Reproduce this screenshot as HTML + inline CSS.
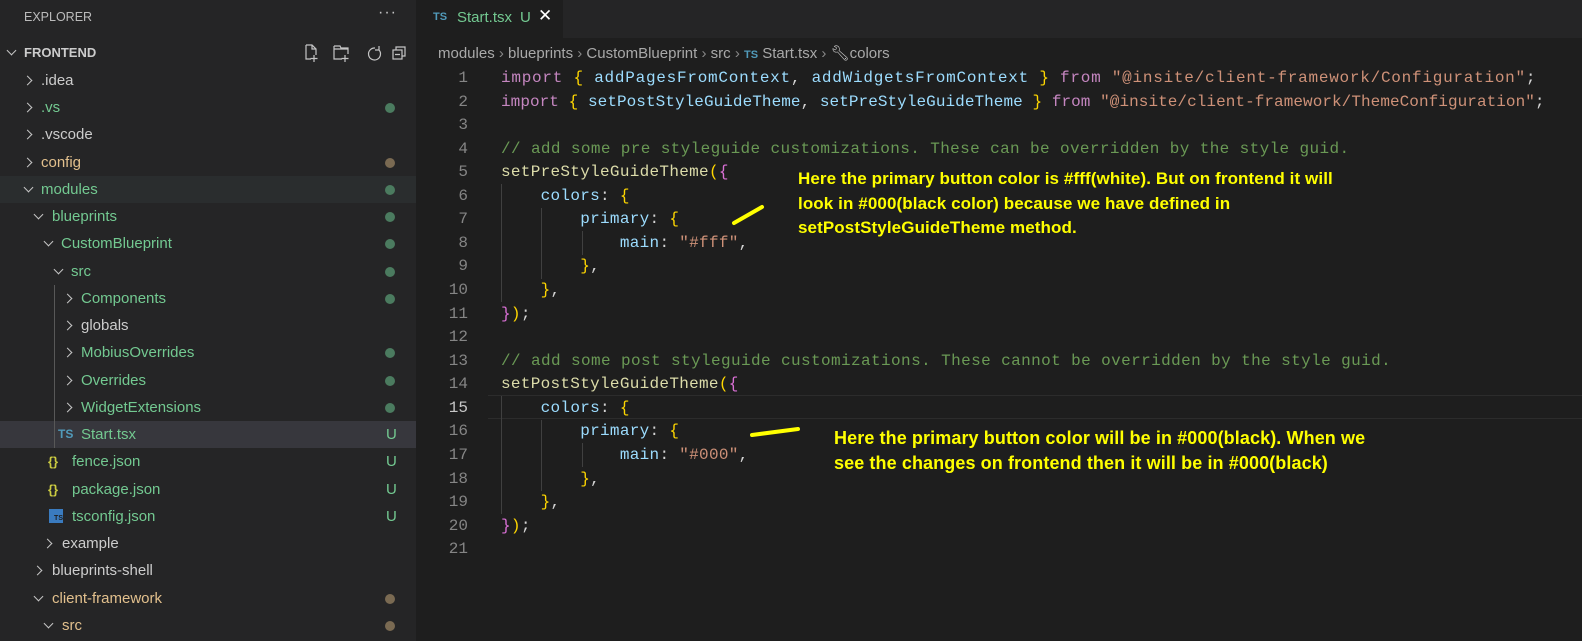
<!DOCTYPE html>
<html><head><meta charset="utf-8"><style>
*{margin:0;padding:0;box-sizing:border-box}
body{width:1582px;height:641px;background:#1e1e1e;overflow:hidden;position:relative;font-family:"Liberation Sans",sans-serif}
#side{position:absolute;left:0;top:0;width:416px;height:641px;background:#252526}
.r{position:absolute;left:0;width:416px;height:27px;line-height:27px;font-size:15px;color:#cccccc;white-space:nowrap}
.r .t{position:absolute;top:0}
.cr{position:absolute;top:10px;width:7px;height:7px;border-right:1.3px solid #c5c5c5;border-bottom:1.3px solid #c5c5c5;transform:rotate(-45deg)}
.cd{position:absolute;top:8px;width:7px;height:7px;border-right:1.3px solid #c5c5c5;border-bottom:1.3px solid #c5c5c5;transform:rotate(45deg)}
.g{color:#73c991}.o{color:#e2c08d}
.dot{position:absolute;left:385px;top:9px;width:10px;height:10px;border-radius:50%;background:#4b7b5f}
.dot.b{background:#7a6a52}
.U{position:absolute;left:386px;top:0;color:#73c991;font-size:15px}
#tabs{position:absolute;left:416px;top:0;width:1166px;height:38px;background:#252526}
#tab{position:absolute;left:416px;top:0;width:147px;height:38px;background:#1e1e1e}
.code{position:absolute;left:501px;font-family:"Liberation Mono",monospace;font-size:16px;letter-spacing:0.3px;color:#d4d4d4;white-space:pre;height:24px;line-height:24px}
.ln{position:absolute;left:430px;width:38px;text-align:right;font-family:"Liberation Mono",monospace;font-size:16px;color:#858585;height:24px;line-height:24px}
.k{color:#c586c0}.v{color:#9cdcfe}.f{color:#dcdcaa}.s{color:#ce9178}.cm{color:#6a9955}.y{color:#ffd700}.p{color:#da70d6}
.ann{position:absolute;color:#ffff00;font-weight:bold;font-size:17px;line-height:24.5px;letter-spacing:0.1px;white-space:nowrap}
.guide{position:absolute;width:1px;background:#404040}
</style></head><body>
<div id="side">
<div style="position:absolute;left:24px;top:10px;font-size:12.5px;color:#bbbbbb">EXPLORER</div>
<div style="position:absolute;left:378px;top:4px;font-size:16px;color:#c5c5c5;letter-spacing:1px">···</div>
<span class="cd" style="left:8px;top:47px"></span>
<div style="position:absolute;left:24px;top:45px;font-size:13px;font-weight:bold;color:#cccccc">FRONTEND</div>
<svg style="position:absolute;left:300px;top:43px" width="110" height="20" fill="none" stroke="#c5c5c5" stroke-width="1.2">
<path d="M6 2h6l4 4v6M6 2v14h5M12 2v4h4M14 12v7M10.5 15.5h7"/>
<path d="M34 3h6l1 2h7v6M34 3v13h8M34 6h14M45 12v7M41.5 15.5h7"/>
<path d="M75 5a6 6 0 1 0 4 2M79 3v4h-4"/>
<rect x="93" y="7" width="9" height="9"/><path d="M96 7V4h9v9h-3M95 11.5h5"/>
</svg>
</div>
<div style="position:absolute;left:0;top:176px;width:416px;height:27px;background:#2a2d2e"></div>
<div style="position:absolute;left:0;top:421px;width:416px;height:27px;background:#37373d"></div>
<div class="guide" style="left:54px;top:285px;height:163px;background:#585858"></div>

<div class="r" style="top:67px"><span class="cr" style="left:24px"></span><span class="t" style="left:41px">.idea</span></div>
<div class="r" style="top:94px"><span class="cr" style="left:24px"></span><span class="t g" style="left:41px">.vs</span><span class="dot"></span></div>
<div class="r" style="top:121px"><span class="cr" style="left:24px"></span><span class="t" style="left:41px">.vscode</span></div>
<div class="r" style="top:149px"><span class="cr" style="left:24px"></span><span class="t o" style="left:41px">config</span><span class="dot b"></span></div>
<div class="r" style="top:176px"><span class="cd" style="left:25px"></span><span class="t g" style="left:41px">modules</span><span class="dot"></span></div>
<div class="r" style="top:203px"><span class="cd" style="left:35px"></span><span class="t g" style="left:52px">blueprints</span><span class="dot"></span></div>
<div class="r" style="top:230px"><span class="cd" style="left:45px"></span><span class="t g" style="left:61px">CustomBlueprint</span><span class="dot"></span></div>
<div class="r" style="top:258px"><span class="cd" style="left:55px"></span><span class="t g" style="left:71px">src</span><span class="dot"></span></div>
<div class="r" style="top:285px"><span class="cr" style="left:64px"></span><span class="t g" style="left:81px">Components</span><span class="dot"></span></div>
<div class="r" style="top:312px"><span class="cr" style="left:64px"></span><span class="t" style="left:81px">globals</span></div>
<div class="r" style="top:339px"><span class="cr" style="left:64px"></span><span class="t g" style="left:81px">MobiusOverrides</span><span class="dot"></span></div>
<div class="r" style="top:367px"><span class="cr" style="left:64px"></span><span class="t g" style="left:81px">Overrides</span><span class="dot"></span></div>
<div class="r" style="top:394px"><span class="cr" style="left:64px"></span><span class="t g" style="left:81px">WidgetExtensions</span><span class="dot"></span></div>
<div class="r" style="top:421px"><span class="t" style="left:58px;font-size:12px;font-weight:bold;color:#519aba">TS</span><span class="t g" style="left:81px">Start.tsx</span><span class="U">U</span></div>
<div class="r" style="top:448px"><span class="t" style="left:48px;font-size:13px;font-weight:bold;color:#cbcb41">{}</span><span class="t g" style="left:72px">fence.json</span><span class="U">U</span></div>
<div class="r" style="top:476px"><span class="t" style="left:48px;font-size:13px;font-weight:bold;color:#cbcb41">{}</span><span class="t g" style="left:72px">package.json</span><span class="U">U</span></div>
<div class="r" style="top:503px"><span style="position:absolute;left:49px;top:6px;width:14px;height:14px;background:#3a7bbf;color:#1e1e1e;font-size:7px;line-height:20px;text-align:right;font-weight:bold">TS</span><span class="t g" style="left:72px">tsconfig.json</span><span class="U">U</span></div>
<div class="r" style="top:530px"><span class="cr" style="left:44px"></span><span class="t" style="left:62px">example</span></div>
<div class="r" style="top:557px"><span class="cr" style="left:34px"></span><span class="t" style="left:52px">blueprints-shell</span></div>
<div class="r" style="top:585px"><span class="cd" style="left:35px"></span><span class="t o" style="left:52px">client-framework</span><span class="dot b"></span></div>
<div class="r" style="top:612px"><span class="cd" style="left:45px"></span><span class="t o" style="left:62px">src</span><span class="dot b"></span></div>

<div id="tabs"></div>
<div id="tab">
<span style="position:absolute;left:17px;top:11px;font-size:11px;font-weight:bold;color:#519aba">TS</span>
<span style="position:absolute;left:41px;top:9px;font-size:15px;color:#73c991">Start.tsx</span>
<span style="position:absolute;left:104px;top:9px;font-size:15px;color:#73c991">U</span>
<span style="position:absolute;left:122px;top:6px;font-size:17px;color:#ffffff">&#10005;</span>
</div>
<div style="position:absolute;left:438px;top:44px;font-size:15px;color:#a9a9a9;white-space:nowrap">modules <span style="color:#888">&#8250;</span> blueprints <span style="color:#888">&#8250;</span> CustomBlueprint <span style="color:#888">&#8250;</span> src <span style="color:#888">&#8250;</span> <b style="font-size:11px;color:#519aba">TS</b> Start.tsx <span style="color:#888">&#8250;</span> <span style="color:#ccc">&#128295;&#xFE0E;</span>colors</div>

<div style="position:absolute;left:488px;top:395px;width:1094px;height:24px;border-top:1px solid #2c2c2c;border-bottom:1px solid #2c2c2c"></div>
<div class="guide" style="left:501px;top:184px;height:118px"></div>
<div class="guide" style="left:541px;top:208px;height:71px"></div>
<div class="guide" style="left:582px;top:231px;height:24px"></div>
<div class="guide" style="left:501px;top:396px;height:118px"></div>
<div class="guide" style="left:541px;top:420px;height:71px"></div>
<div class="guide" style="left:582px;top:443px;height:24px"></div>

<div class="ln" style="top:66px">1</div><div class="ln" style="top:90px">2</div><div class="ln" style="top:113px">3</div><div class="ln" style="top:137px">4</div><div class="ln" style="top:160px">5</div><div class="ln" style="top:184px">6</div><div class="ln" style="top:207px">7</div><div class="ln" style="top:231px">8</div><div class="ln" style="top:254px">9</div><div class="ln" style="top:278px">10</div><div class="ln" style="top:302px">11</div><div class="ln" style="top:325px">12</div><div class="ln" style="top:349px">13</div><div class="ln" style="top:372px">14</div><div class="ln" style="top:396px;color:#c6c6c6">15</div><div class="ln" style="top:419px">16</div><div class="ln" style="top:443px">17</div><div class="ln" style="top:467px">18</div><div class="ln" style="top:490px">19</div><div class="ln" style="top:514px">20</div><div class="ln" style="top:537px">21</div>

<div class="code" style="top:66px;letter-spacing:0.75px"><span class="k">import</span> <span class="y">{</span> <span class="v">addPagesFromContext</span>, <span class="v">addWidgetsFromContext</span> <span class="y">}</span> <span class="k">from</span> <span class="s">"@insite/client-framework/Configuration"</span>;</div>
<div class="code" style="top:90px;letter-spacing:0.06px"><span class="k">import</span> <span class="y">{</span> <span class="v">setPostStyleGuideTheme</span>, <span class="v">setPreStyleGuideTheme</span> <span class="y">}</span> <span class="k">from</span> <span class="s">"@insite/client-framework/ThemeConfiguration"</span>;</div>
<div class="code cm" style="top:137px;letter-spacing:0.38px">// add some pre styleguide customizations. These can be overridden by the style guid.</div>
<div class="code" style="top:160px"><span class="f">setPreStyleGuideTheme</span><span class="y">(</span><span class="p">{</span></div>
<div class="code" style="top:184px">    <span class="v">colors</span>: <span class="y">{</span></div>
<div class="code" style="top:207px">        <span class="v">primary</span>: <span class="y">{</span></div>
<div class="code" style="top:231px">            <span class="v">main</span>: <span class="s">"#fff"</span>,</div>
<div class="code" style="top:254px">        <span class="y">}</span>,</div>
<div class="code" style="top:278px">    <span class="y">}</span>,</div>
<div class="code" style="top:302px"><span class="p">}</span><span class="y">)</span>;</div>
<div class="code cm" style="top:349px;letter-spacing:0.4px">// add some post styleguide customizations. These cannot be overridden by the style guid.</div>
<div class="code" style="top:372px"><span class="f">setPostStyleGuideTheme</span><span class="y">(</span><span class="p">{</span></div>
<div class="code" style="top:396px">    <span class="v">colors</span>: <span class="y">{</span></div>
<div class="code" style="top:419px">        <span class="v">primary</span>: <span class="y">{</span></div>
<div class="code" style="top:443px">            <span class="v">main</span>: <span class="s">"#000"</span>,</div>
<div class="code" style="top:467px">        <span class="y">}</span>,</div>
<div class="code" style="top:490px">    <span class="y">}</span>,</div>
<div class="code" style="top:514px"><span class="p">}</span><span class="y">)</span>;</div>

<svg style="position:absolute;left:720px;top:200px" width="100" height="250">
<path d="M14 23L42 7" stroke="#ffff00" stroke-width="4" stroke-linecap="round"/>
<path d="M32 235L78 229" stroke="#ffff00" stroke-width="4" stroke-linecap="round"/>
</svg>
<div class="ann" style="left:798px;top:167px">Here the primary button color is #fff(white). But on frontend it will<br>look in #000(black color) because we have defined in<br>setPostStyleGuideTheme method.</div>
<div class="ann" style="left:834px;top:426px;font-size:18px;letter-spacing:0.1px">Here the primary button color will be in #000(black). When we<br>see the changes on frontend then it will be in #000(black)</div>
</body></html>
